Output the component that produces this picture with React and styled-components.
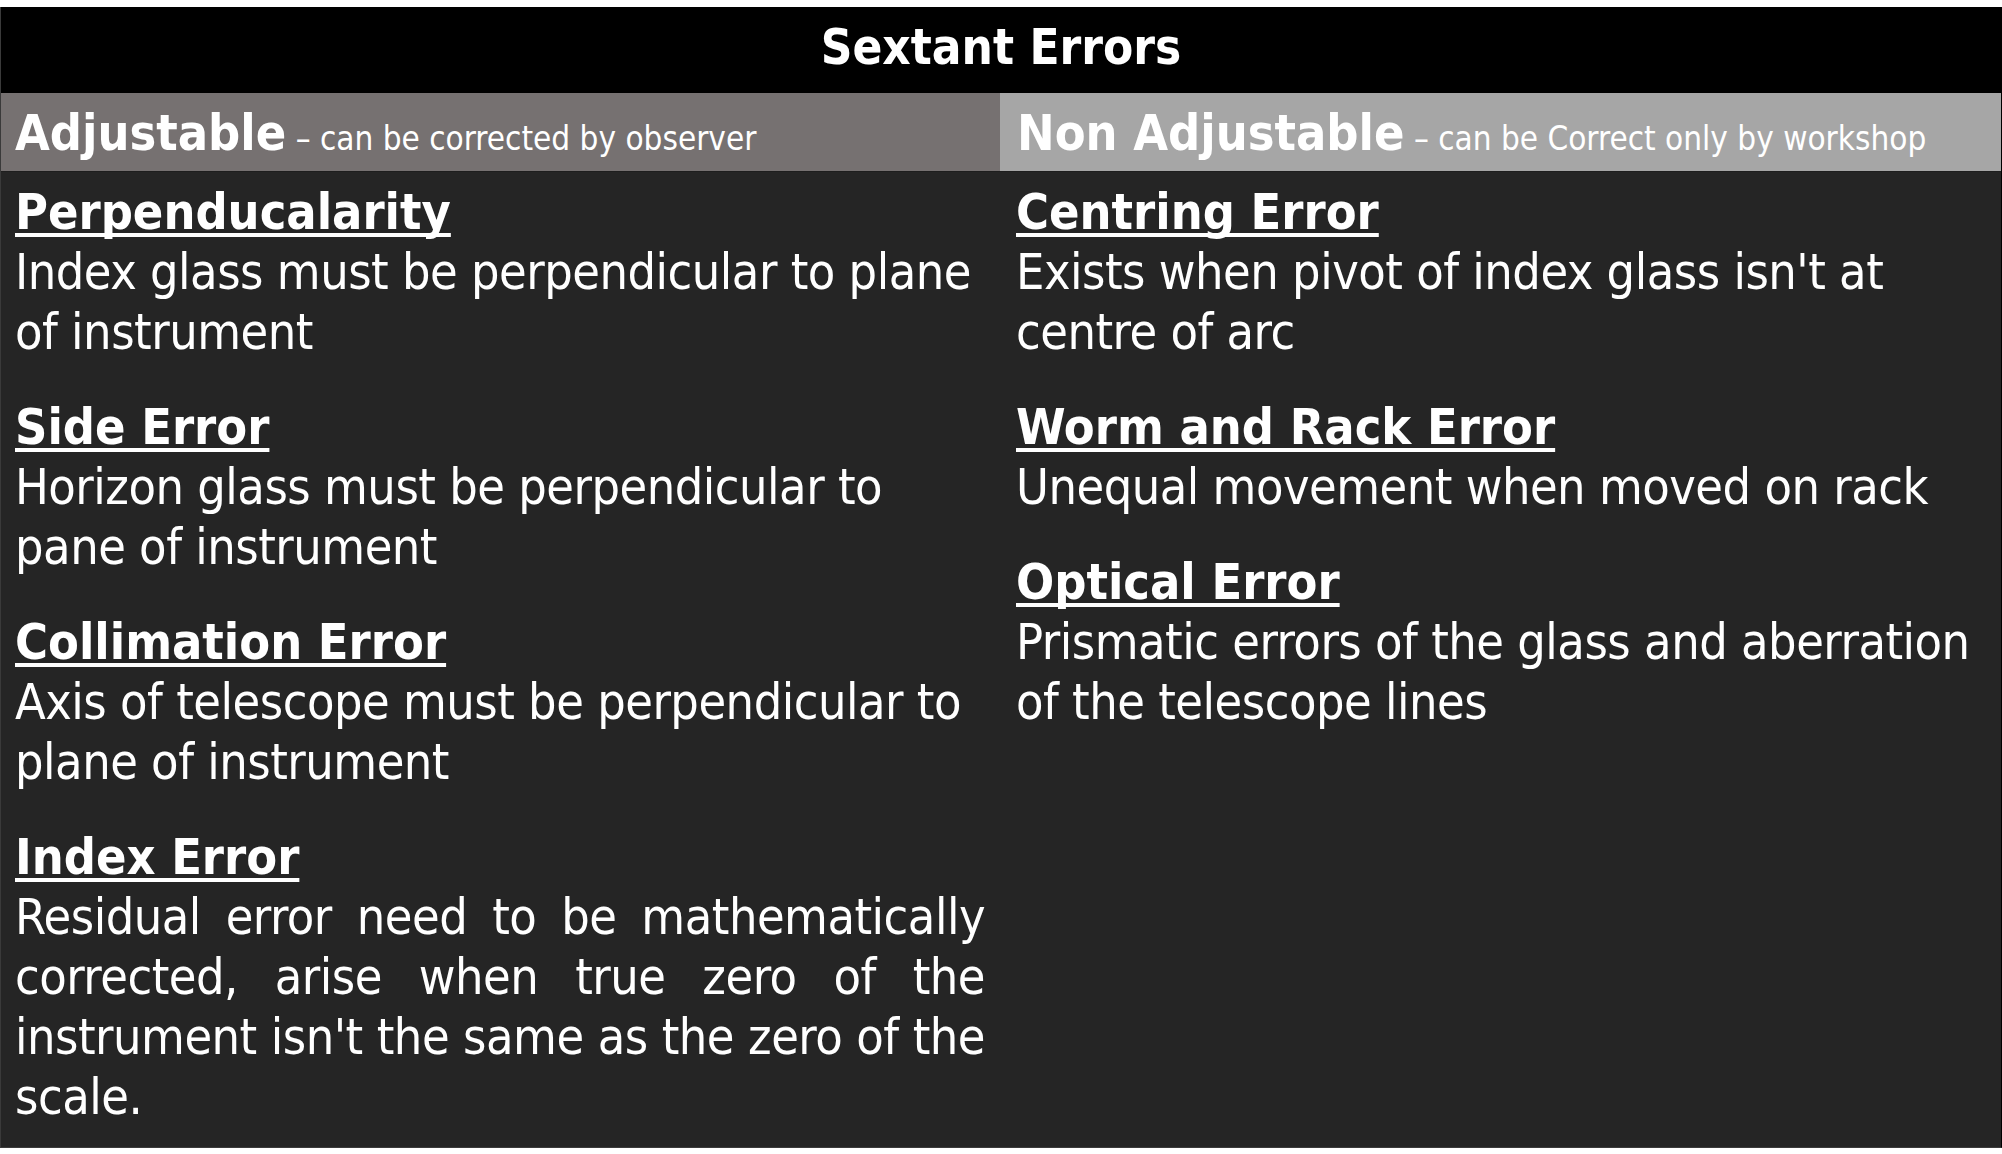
import React from "react";
import styled, { createGlobalStyle } from "styled-components";

const GlobalStyle = createGlobalStyle`
  html, body {
    margin: 0;
    padding: 0;
    background: #ffffff;
  }
  body {
    font-family: "DejaVu Sans Condensed", "DejaVu Sans", sans-serif;
    color: #ffffff;
  }
`;

const Page = styled.div`
  padding: 7px 0 8px 0;
  width: 2002px;
  box-sizing: border-box;
`;

const Table = styled.section`
  width: 2002px;
  box-sizing: border-box;
  border-right: 1px solid #000000;
  border-left: 1px solid #3a3a3a;
  border-bottom: 1px solid #3c3c3c;
  display: flex;
  flex-direction: column;
`;

const TitleBar = styled.header`
  background: #000000;
  height: 86px;
  box-sizing: border-box;
  padding-top: 11px;
  text-align: center;
  font-weight: 700;
  font-size: 49px;
  line-height: 60px;
  color: #ffffff;
`;

const SubRow = styled.div`
  display: grid;
  grid-template-columns: 999px 1fr;
  height: 78px;
`;

const SubCell = styled.div`
  background: ${(p) => p.$bg};
  box-sizing: border-box;
  padding: 10px 0 0 ${(p) => p.$pad}px;
  white-space: nowrap;
  line-height: 60px;
  color: #ffffff;
`;

const SubStrong = styled.span`
  font-weight: 700;
  font-size: 50px;
`;

const SubNote = styled.span`
  font-size: 33px;
  font-weight: 400;
`;

const Body = styled.div`
  display: grid;
  grid-template-columns: 999px 1fr;
  background: #252525;
  min-height: 974px;
  border-top: 1px solid #1e1e1e;
`;

const Column = styled.div`
  box-sizing: border-box;
  padding: 10px 15px 20px ${(p) => p.$pad}px;
  display: flex;
  flex-direction: column;
  gap: 35px;
`;

const Item = styled.article`
  display: flex;
  flex-direction: column;
`;

const Heading = styled.h3`
  margin: 0;
  font-size: 50px;
  font-weight: 700;
  line-height: 60px;
  white-space: nowrap;
  text-decoration: underline;
  text-decoration-thickness: 4px;
  text-underline-offset: 4px;
  text-decoration-skip-ink: none;
`;

const Line = styled.div`
  font-size: 50px;
  line-height: 60px;
  letter-spacing: -0.5px;
  white-space: nowrap;
  text-align: left;
  text-align-last: ${(p) => (p.$justify ? "justify" : "left")};
`;

const leftItems = [
  {
    title: "Perpenducalarity",
    lines: ["Index glass must be perpendicular to plane", "of instrument"],
  },
  {
    title: "Side Error",
    lines: ["Horizon glass must be perpendicular to", "pane of instrument"],
  },
  {
    title: "Collimation Error",
    lines: ["Axis of telescope must be perpendicular to", "plane of instrument"],
  },
  {
    title: "Index Error",
    justify: true,
    lines: [
      "Residual error need to be mathematically",
      "corrected, arise when true zero of the",
      "instrument isn't the same as the zero of the",
      "scale.",
    ],
  },
];

const rightItems = [
  {
    title: "Centring Error",
    lines: ["Exists when pivot of index glass isn't at", "centre of arc"],
  },
  {
    title: "Worm and Rack Error",
    lines: ["Unequal movement when moved on rack"],
  },
  {
    title: "Optical Error",
    lines: ["Prismatic errors of the glass and aberration", "of the telescope lines"],
  },
];

function ErrorItem({ item }) {
  return (
    <Item>
      <Heading>{item.title}</Heading>
      {item.lines.map((l, i) => (
        <Line key={i} $justify={item.justify && i < item.lines.length - 1}>
          {l}
        </Line>
      ))}
    </Item>
  );
}

export default function App() {
  return (
    <>
      <GlobalStyle />
      <Page>
        <Table>
          <TitleBar>Sextant Errors</TitleBar>
          <SubRow>
            <SubCell $bg="#767171" $pad={14}>
              <SubStrong>Adjustable</SubStrong>
              <SubNote> – can be corrected by observer</SubNote>
            </SubCell>
            <SubCell $bg="#a6a6a6" $pad={17}>
              <SubStrong>Non Adjustable</SubStrong>
              <SubNote> – can be Correct only by workshop</SubNote>
            </SubCell>
          </SubRow>
          <Body>
            <Column $pad={14}>
              {leftItems.map((it) => (
                <ErrorItem key={it.title} item={it} />
              ))}
            </Column>
            <Column $pad={16}>
              {rightItems.map((it) => (
                <ErrorItem key={it.title} item={it} />
              ))}
            </Column>
          </Body>
        </Table>
      </Page>
    </>
  );
}
